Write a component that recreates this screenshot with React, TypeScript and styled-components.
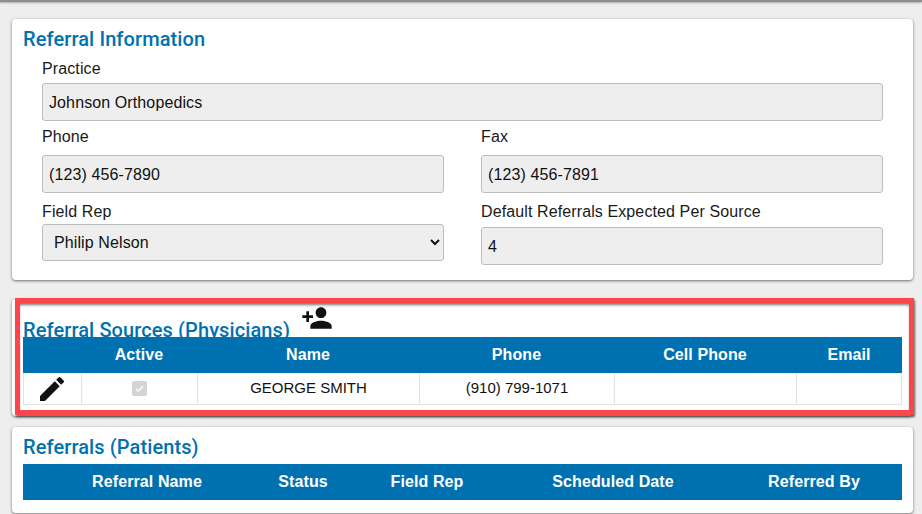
import React from 'react';
import styled, { createGlobalStyle } from 'styled-components';
import { MdEdit, MdPersonAdd } from 'react-icons/md';

const GlobalStyle = createGlobalStyle`
  html, body { margin: 0; padding: 0; background: #eeeeee; overflow: hidden; }
  body { font-family: "Liberation Sans", Arial, sans-serif; color: #111; }
`;

const TopEdge = styled.div`
  height: 2px;
  background: #8f8f8f;
  box-shadow: 0 1px 2px rgba(0, 0, 0, 0.3);
`;

const Page = styled.div`
  width: 922px;
  height: 514px;
  overflow: hidden;
`;

const Stack = styled.div`
  display: flex;
  flex-direction: column;
  padding: 17px 9px 0 12px;
`;

const Card = styled.section<{ $height: number; $after: number }>`
  position: relative;
  box-sizing: border-box;
  height: ${p => p.$height}px;
  margin-bottom: ${p => p.$after}px;
  padding: 0 11px;
  background: #fff;
  border-radius: 4px;
  box-shadow: 0 1px 3px rgba(0, 0, 0, 0.55);
`;

const Title = styled.h2`
  margin: 0;
  font-family: Roboto, sans-serif;
  font-weight: 500;
  font-size: 20px;
  line-height: 24px;
  letter-spacing: 0.1px;
  color: #0071b0;
`;

const InfoTitle = styled(Title)`
  padding-top: 8px;
`;

const PatientsTitle = styled(Title)`
  padding-top: 8px;
  height: 29px;
`;

const SourcesHead = styled.div`
  display: flex;
  align-items: flex-start;
  height: 38px;
  overflow: hidden;
`;

const SourcesTitle = styled(Title)`
  padding-top: 19px;
`;

const AddButton = styled.span`
  display: block;
  margin: 3px 0 0 11px;
  color: #111;
  font-size: 32px;
  line-height: 0;
`;

const Form = styled.div`
  padding: 0 19px;
`;

const Columns = styled.div`
  display: grid;
  grid-template-columns: 402px 402px;
  column-gap: 37px;
`;

const Label = styled.label<{ $top: number; $gap: number }>`
  display: block;
  margin: ${p => p.$top}px 0 ${p => p.$gap}px;
  font-size: 16px;
  line-height: 18px;
  letter-spacing: 0.11px;
  color: #1a1a1a;
`;

const TextField = styled.input`
  display: block;
  box-sizing: border-box;
  width: 100%;
  height: 38px;
  padding: 2px 6px 0;
  font: 16px "Liberation Sans", Arial, sans-serif;
  letter-spacing: 0.11px;
  color: #111;
  background: #eeeeee;
  border: 1px solid #bdbdbd;
  border-radius: 3px;
  opacity: 1;
`;

const SelectField = styled.select`
  display: block;
  box-sizing: border-box;
  width: 100%;
  height: 37px;
  padding: 0 7px;
  font: 16px "Liberation Sans", Arial, sans-serif;
  letter-spacing: 0.11px;
  color: #111;
  background: #eeeeee;
  border: 1px solid #bdbdbd;
  border-radius: 3px;
`;

const Table = styled.table`
  width: 879px;
  table-layout: fixed;
  border-collapse: separate;
  border-spacing: 0;
`;

const HeadCell = styled.th`
  height: 36px;
  padding: 0;
  background: #0071b0;
  color: #fff;
  font-size: 16px;
  font-weight: 700;
  letter-spacing: 0.1px;
  text-align: center;
`;

const Cell = styled.td`
  box-sizing: border-box;
  height: 32px;
  padding: 0 0 2px;
  border-left: 1px solid #e2e2e2;
  border-bottom: 1px solid #e2e2e2;
  font-size: 15px;
  text-align: center;
  color: #111;

  &:last-child {
    border-right: 1px solid #e2e2e2;
  }
`;

const EditIcon = styled.span`
  display: block;
  height: 29px;
  margin-left: -1px;
  color: #111;
  font-size: 32px;
  line-height: 0;
`;

const CheckBox = styled.span`
  display: inline-flex;
  align-items: center;
  justify-content: center;
  width: 15px;
  height: 15px;
  border-radius: 2px;
  background: #d3d3d3;
  vertical-align: middle;
`;

const Highlight = styled.div`
  position: absolute;
  top: -1px;
  left: 3px;
  right: -1px;
  bottom: 1px;
  box-sizing: border-box;
  border: 5px solid #ff444a;
  box-shadow: 1px 2px 2px rgba(0, 0, 0, 0.55), inset 0 3px 3px -1px rgba(0, 0, 0, 0.55);
  pointer-events: none;
`;

type Column = { label: string; width: number };

const sourceCols: Column[] = [
  { label: '', width: 58 },
  { label: 'Active', width: 116 },
  { label: 'Name', width: 222 },
  { label: 'Phone', width: 195 },
  { label: 'Cell Phone', width: 182 },
  { label: 'Email', width: 106 },
];

const patientCols: Column[] = [
  { label: '', width: 19 },
  { label: 'Referral Name', width: 210 },
  { label: 'Status', width: 102 },
  { label: 'Field Rep', width: 146 },
  { label: 'Scheduled Date', width: 226 },
  { label: 'Referred By', width: 176 },
];

function TableHead({ cols }: { cols: Column[] }) {
  return (
    <>
      <colgroup>
        {cols.map((c, i) => <col key={i} width={c.width} />)}
      </colgroup>
      <thead>
        <tr>
          {cols.map((c, i) => <HeadCell key={i}>{c.label}</HeadCell>)}
        </tr>
      </thead>
    </>
  );
}

export default function App() {
  return (
    <Page>
      <GlobalStyle />
      <TopEdge />
      <Stack>
        <Card $height={261} $after={19}>
          <InfoTitle>Referral Information</InfoTitle>
          <Form>
            <Label $top={9} $gap={5}>Practice</Label>
            <TextField disabled value="Johnson Orthopedics" readOnly />
            <Columns>
              <div>
                <Label $top={7} $gap={9}>Phone</Label>
                <TextField disabled value="(123) 456-7890" readOnly />
                <Label $top={10} $gap={3}>Field Rep</Label>
                <SelectField defaultValue="Philip Nelson">
                  <option>Philip Nelson</option>
                </SelectField>
              </div>
              <div>
                <Label $top={7} $gap={9}>Fax</Label>
                <TextField disabled value="(123) 456-7891" readOnly />
                <Label $top={10} $gap={6}>Default Referrals Expected Per Source</Label>
                <TextField disabled value="4" readOnly />
              </div>
            </Columns>
          </Form>
        </Card>

        <Card $height={117} $after={11}>
          <SourcesHead>
            <SourcesTitle>Referral Sources (Physicians)</SourcesTitle>
            <AddButton><MdPersonAdd /></AddButton>
          </SourcesHead>
          <Table>
            <TableHead cols={sourceCols} />
            <tbody>
              <tr>
                <Cell><EditIcon><MdEdit /></EditIcon></Cell>
                <Cell>
                  <CheckBox>
                    <svg width="11" height="11" viewBox="0 0 11 11" aria-hidden="true">
                      <path d="M2 5.8 4.4 8.2 9 3" fill="none" stroke="#f4f4f4" strokeWidth="2" />
                    </svg>
                  </CheckBox>
                </Cell>
                <Cell>GEORGE SMITH</Cell>
                <Cell>(910) 799-1071</Cell>
                <Cell />
                <Cell />
              </tr>
            </tbody>
          </Table>
          <Highlight />
        </Card>

        <Card $height={86} $after={0}>
          <PatientsTitle>Referrals (Patients)</PatientsTitle>
          <Table>
            <TableHead cols={patientCols} />
          </Table>
        </Card>
      </Stack>
    </Page>
  );
}
